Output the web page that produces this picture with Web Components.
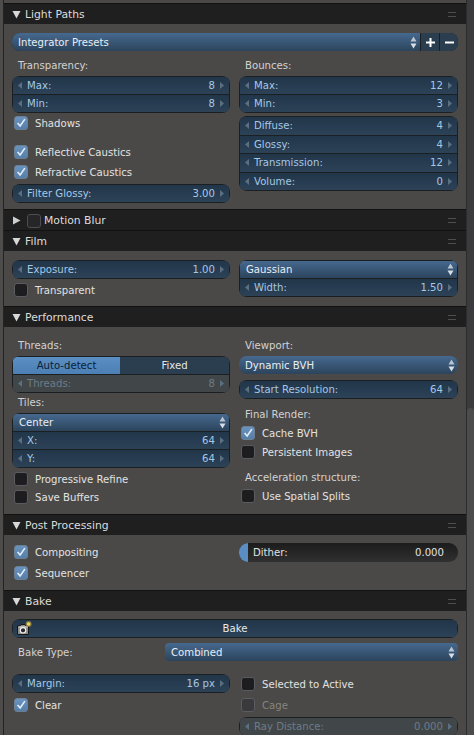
<!DOCTYPE html>
<html>
<head>
<meta charset="utf-8">
<title>Render properties</title>
<style>
  html, body { margin: 0; height: 735px; overflow: hidden; background: #4a4947; }
  body { font: 10.15px "DejaVu Sans", sans-serif; color: #e6e6e6; }
</style>
</head>
<body>
<props-editor>

  <prop-panel title="Light Paths" style="--pt:9px;--pb:6px">
    <prop-group style="--row:18px;padding:0" row>
      <prop-select style="flex:1" text="Integrator Presets"></prop-select>
      <prop-tool sign="+"></prop-tool>
      <prop-tool sign="-"></prop-tool>
    </prop-group>
    <prop-cols>
      <div slot="left">
        <prop-label style="margin-top:7px">Transparency:</prop-label>
        <prop-group style="margin-top:2px">
          <prop-num label="Max:" value="8"></prop-num>
          <prop-num label="Min:" value="8"></prop-num>
        </prop-group>
        <prop-check checked style="margin-top:1px">Shadows</prop-check>
        <prop-check checked style="margin-top:11px">Reflective Caustics</prop-check>
        <prop-check checked style="margin-top:2px">Refractive Caustics</prop-check>
        <prop-group style="margin-top:3px">
          <prop-num label="Filter Glossy:" value="3.00"></prop-num>
        </prop-group>
      </div>
      <div slot="right">
        <prop-label style="margin-top:7px">Bounces:</prop-label>
        <prop-group style="margin-top:2px">
          <prop-num label="Max:" value="12"></prop-num>
          <prop-num label="Min:" value="3"></prop-num>
        </prop-group>
        <prop-group style="margin-top:3px;--row:17.6px">
          <prop-num label="Diffuse:" value="4"></prop-num>
          <prop-num label="Glossy:" value="4"></prop-num>
          <prop-num label="Transmission:" value="12"></prop-num>
          <prop-num label="Volume:" value="0"></prop-num>
        </prop-group>
      </div>
    </prop-cols>
  </prop-panel>

  <prop-panel title="Motion Blur" closed toggle></prop-panel>

  <prop-panel title="Film" style="--pt:9px;--pb:7px">
    <prop-cols>
      <div slot="left">
        <prop-group>
          <prop-num label="Exposure:" value="1.00"></prop-num>
        </prop-group>
        <prop-check style="margin-top:2px">Transparent</prop-check>
      </div>
      <div slot="right">
        <prop-group>
          <prop-select text="Gaussian"></prop-select>
          <prop-num label="Width:" value="1.50"></prop-num>
        </prop-group>
      </div>
    </prop-cols>
  </prop-panel>

  <prop-panel title="Performance" style="--pt:11px;--pb:8px">
    <prop-cols>
      <div slot="left">
        <prop-label>Threads:</prop-label>
        <prop-group style="margin-top:2px">
          <prop-tabs first="Auto-detect" second="Fixed"></prop-tabs>
          <prop-num label="Threads:" value="8" disabled></prop-num>
        </prop-group>
        <prop-label style="margin-top:2px">Tiles:</prop-label>
        <prop-group style="margin-top:2px">
          <prop-select text="Center"></prop-select>
          <prop-num label="X:" value="64"></prop-num>
          <prop-num label="Y:" value="64"></prop-num>
        </prop-group>
        <prop-check style="margin-top:2px">Progressive Refine</prop-check>
        <prop-check>Save Buffers</prop-check>
      </div>
      <div slot="right">
        <prop-label>Viewport:</prop-label>
        <prop-group style="margin-top:2px;--row:18px;padding:0">
          <prop-select text="Dynamic BVH"></prop-select>
        </prop-group>
        <prop-group style="margin-top:6px">
          <prop-num label="Start Resolution:" value="64"></prop-num>
        </prop-group>
        <prop-label style="margin-top:8px">Final Render:</prop-label>
        <prop-check checked style="margin-top:1px">Cache BVH</prop-check>
        <prop-check style="margin-top:1px">Persistent Images</prop-check>
        <prop-label style="margin-top:9px">Acceleration structure:</prop-label>
        <prop-check style="margin-top:1px">Use Spatial Splits</prop-check>
      </div>
    </prop-cols>
  </prop-panel>

  <prop-panel title="Post Processing" style="--pt:8px;--pb:8px">
    <prop-cols>
      <div slot="left">
        <prop-check checked>Compositing</prop-check>
        <prop-check checked style="margin-top:3px">Sequencer</prop-check>
      </div>
      <div slot="right">
        <prop-slider label="Dither:" value="0.000"></prop-slider>
      </div>
    </prop-cols>
  </prop-panel>

  <prop-panel title="Bake" style="--pt:8px;--pb:0px">
    <prop-group>
      <prop-action text="Bake"></prop-action>
    </prop-group>
    <bake-type style="margin-top:5px"></bake-type>
    <prop-cols>
      <div slot="left">
        <prop-group style="margin-top:13px">
          <prop-num label="Margin:" value="16 px"></prop-num>
        </prop-group>
        <prop-check checked style="margin-top:3px">Clear</prop-check>
      </div>
      <div slot="right">
        <prop-check style="margin-top:14px">Selected to Active</prop-check>
        <prop-check disabled style="margin-top:3px">Cage</prop-check>
        <prop-group style="margin-top:3px">
          <prop-num label="Ray Distance:" value="0.000" disabled></prop-num>
        </prop-group>
      </div>
    </prop-cols>
  </prop-panel>

</props-editor>

<script>
// left and right pointing triangles of a number field
const arrowLeft = `<svg width="4" height="7" viewBox="0 0 4 7"><path d="M4 0V7L0 3.5Z" fill="currentColor"/></svg>`;
const arrowRight = `<svg width="4" height="7" viewBox="0 0 4 7"><path d="M0 0V7L4 3.5Z" fill="currentColor"/></svg>`;

class PropsEditor extends HTMLElement {
    connectedCallback() {
        const sd = this.attachShadow({ mode: 'open' });
        sd.innerHTML = `<style>
        :host { display: flex; height: 735px; background: #49484a; }
        .edge { width: 3px; background: #4d4c4b; border-right: 1px solid #232323; flex: none; }
        main { width: 462px; flex: none; padding-top: 3px; background: #4a4947; box-sizing: border-box; height: 735px; overflow: hidden; }
        .track { flex: 1; background: #3b3b3e; border-left: 1px solid #2c2c2c; padding-top: 408px; }
        .thumb { height: 327px; background: #4c4c4d; border-radius: 4px 4px 0 0; }
        </style>
        <div class="edge"></div>
        <main><slot></slot></main>
        <div class="track"><div class="thumb"></div></div>`;
    }
}

class PropPanel extends HTMLElement {
    connectedCallback() {
        const sd = this.attachShadow({ mode: 'open' });
        const closed = this.hasAttribute('closed');
        const tri = closed
            ? `<svg width="9" height="9" viewBox="0 0 9 9"><path d="M1 0.5L8.5 4.5L1 8.5Z" fill="#cfcfcf"/></svg>`
            : `<svg width="9" height="9" viewBox="0 0 9 9"><path d="M0.5 1H8.5L4.5 8.5Z" fill="#d8d8d8"/></svg>`;
        const toggle = this.hasAttribute('toggle') ? `<span class="box"></span>` : '';
        sd.innerHTML = `<style>
        :host { display: block; }
        header { display: flex; align-items: center; height: 21px; box-sizing: border-box; padding: 1px 10px 0 8px; background: #1f1f1f; border-top: 1px solid #121212; font-size: 10.8px; color: #dcdcdc; }
        svg { margin-right: 4px; flex: none; }
        .box { width: 12px; height: 12px; margin: 0 3px 0 2px; border: 1px solid #4d4d52; border-radius: 3px; background: #262628; }
        .grip { margin-left: auto; width: 8px; height: 3px; border-top: 1px solid #4e4e4e; border-bottom: 1px solid #4e4e4e; }
        section { padding: var(--pt, 0) 8px var(--pb, 0); }
        section.empty { display: none; }
        </style>
        <header>${tri}${toggle}<span>${this.getAttribute('title')}</span><div class="grip"></div></header>
        <section class="${closed ? 'empty' : ''}"><slot></slot></section>`;
    }
}

class PropCols extends HTMLElement {
    connectedCallback() {
        const sd = this.attachShadow({ mode: 'open' });
        sd.innerHTML = `<style>
        :host { display: grid; grid-template-columns: 218px 219px; column-gap: 9px; }
        </style>
        <slot name="left"></slot><slot name="right"></slot>`;
    }
}

class PropLabel extends HTMLElement {
    connectedCallback() {
        const sd = this.attachShadow({ mode: 'open' });
        sd.innerHTML = `<style>
        :host { display: block; height: 16px; line-height: 16px; padding-left: 6px; color: #d2d2d2; white-space: nowrap; }
        </style><slot></slot>`;
    }
}

// rounded box that joins the fields inside it
class PropGroup extends HTMLElement {
    connectedCallback() {
        const sd = this.attachShadow({ mode: 'open' });
        sd.innerHTML = `<style>
        :host { display: flex; flex-direction: column; gap: 1px; padding: 1px; background: #1c1f22; border-radius: 8px; overflow: hidden; }
        :host([row]) { flex-direction: row; }
        </style><slot></slot>`;
    }
}

class PropNum extends HTMLElement {
    connectedCallback() {
        const sd = this.attachShadow({ mode: 'open' });
        sd.innerHTML = `<style>
        :host { display: flex; align-items: center; height: var(--row, 17px); padding: 0 5px; background: linear-gradient(#22364a, #2c4256); color: #a5c8e6; white-space: nowrap; }
        :host([disabled]) { background: #414648; color: #6d7c88; }
        svg { flex: none; color: #5a6f82; }
        .label { margin-left: 5px; flex: 1; }
        .value { margin-right: 5px; }
        </style>
        ${arrowLeft}<span class="label">${this.getAttribute('label')}</span><span class="value">${this.getAttribute('value')}</span>${arrowRight}`;
    }
}

class PropSelect extends HTMLElement {
    connectedCallback() {
        const sd = this.attachShadow({ mode: 'open' });
        sd.innerHTML = `<style>
        :host { display: flex; align-items: center; height: var(--row, 17px); padding: 0 3px 0 6px; background: linear-gradient(#46698f, #2c445c); color: #e8eef4; white-space: nowrap; }
        span { flex: 1; }
        svg { flex: none; }
        </style>
        <span>${this.getAttribute('text')}</span>
        <svg width="7" height="13" viewBox="0 0 7 13"><path d="M3.5 0.5L6.5 5.5H0.5Z" fill="#b9c6d2"/><path d="M0.5 7.5H6.5L3.5 12.5Z" fill="#d6dde4"/></svg>`;
    }
}

class PropTool extends HTMLElement {
    connectedCallback() {
        const sd = this.attachShadow({ mode: 'open' });
        const bar = this.getAttribute('sign') === '+' ? '<path d="M5.5 1V10" stroke="#fff" stroke-width="2"/>' : '';
        sd.innerHTML = `<style>
        :host { display: flex; align-items: center; justify-content: center; width: 18px; background: #2a3e50; }
        </style>
        <svg width="11" height="11" viewBox="0 0 11 11"><path d="M1 5.5H10" stroke="#fff" stroke-width="2"/>${bar}</svg>`;
    }
}

class PropTabs extends HTMLElement {
    connectedCallback() {
        const sd = this.attachShadow({ mode: 'open' });
        sd.innerHTML = `<style>
        :host { display: grid; grid-template-columns: 107px 1fr; height: var(--row, 17px); line-height: 17px; text-align: center; }
        .on { background: linear-gradient(#5b8fc4, #4c80b4); color: #0c2036; }
        .off { background: #2b3e50; color: #e6e6e6; }
        </style>
        <div class="on">${this.getAttribute('first')}</div><div class="off">${this.getAttribute('second')}</div>`;
    }
}

class PropCheck extends HTMLElement {
    connectedCallback() {
        const sd = this.attachShadow({ mode: 'open' });
        const mark = this.hasAttribute('checked')
            ? `<svg width="14" height="14" viewBox="0 0 14 14"><path d="M3 7L6 10.5L11.5 2.5" fill="none" stroke="#e4eef8" stroke-width="1.9"/></svg>` : '';
        sd.innerHTML = `<style>
        :host { display: flex; align-items: center; height: 18px; padding-left: 2px; color: #e2e2e2; white-space: nowrap; }
        :host([disabled]) { color: #85847f; }
        .box { width: 12px; height: 12px; margin-right: 7px; border: 1px solid #5b5b62; border-radius: 3px; background: #1d1d20; display: flex; align-items: center; justify-content: center; flex: none; }
        :host([checked]) .box { background: linear-gradient(#6a94bf, #557fa8); border-color: #6a7f94; }
        :host([disabled]) .box { background: #3a393b; }
        </style>
        <div class="box">${mark}</div><slot></slot>`;
    }
}

class PropSlider extends HTMLElement {
    connectedCallback() {
        const sd = this.attachShadow({ mode: 'open' });
        sd.innerHTML = `<style>
        :host { display: flex; align-items: center; height: 19px; border-radius: 9px; background: linear-gradient(#1c1c1c, #303030); overflow: hidden; color: #e2e2e2; white-space: nowrap; }
        .fill { width: 9px; height: 100%; background: #5b8fc4; margin-right: 5px; flex: none; }
        .label { flex: 1; }
        .value { margin-right: 14px; }
        </style>
        <div class="fill"></div><span class="label">${this.getAttribute('label')}</span><span class="value">${this.getAttribute('value')}</span>`;
    }
}

class PropAction extends HTMLElement {
    connectedCallback() {
        const sd = this.attachShadow({ mode: 'open' });
        sd.innerHTML = `<style>
        :host { display: flex; align-items: center; height: 17px; background: linear-gradient(#22364a, #2c4256); color: #e8e8e8; }
        svg { margin-left: 3px; flex: none; }
        span { flex: 1; text-align: center; margin-right: 19px; }
        </style>
        <svg width="16" height="16" viewBox="0 0 16 16">
          <path d="M1.5 5H4L5 3.5H9L10 5H12.5V13.5H1.5Z" fill="#8f8d88" stroke="#15181b" stroke-width="1"/>
          <path d="M2.5 6H11.5" stroke="#e8e6e0" stroke-width="1.2"/>
          <circle cx="7" cy="9.3" r="2.7" fill="#2b2b2d" stroke="#f2f2f2" stroke-width="1.1"/>
          <circle cx="12.6" cy="3" r="3" fill="#ecc94a" opacity=".45"/>
          <circle cx="12.6" cy="3" r="1.8" fill="#f3d558"/>
        </svg>
        <span>${this.getAttribute('text')}</span>`;
    }
}

class BakeType extends HTMLElement {
    connectedCallback() {
        const sd = this.attachShadow({ mode: 'open' });
        sd.innerHTML = `<style>
        :host { display: grid; grid-template-columns: 153px 1fr; align-items: center; }
        </style>
        <prop-label style="margin-top:2px">Bake Type:</prop-label>
        <prop-group style="--row:18px;padding:0;border-radius:4px"><prop-select text="Combined"></prop-select></prop-group>`;
    }
}

customElements.define('props-editor', PropsEditor);
customElements.define('prop-panel', PropPanel);
customElements.define('prop-cols', PropCols);
customElements.define('prop-label', PropLabel);
customElements.define('prop-group', PropGroup);
customElements.define('prop-num', PropNum);
customElements.define('prop-select', PropSelect);
customElements.define('prop-tool', PropTool);
customElements.define('prop-tabs', PropTabs);
customElements.define('prop-check', PropCheck);
customElements.define('prop-slider', PropSlider);
customElements.define('prop-action', PropAction);
customElements.define('bake-type', BakeType);
</script>
</body>
</html>
